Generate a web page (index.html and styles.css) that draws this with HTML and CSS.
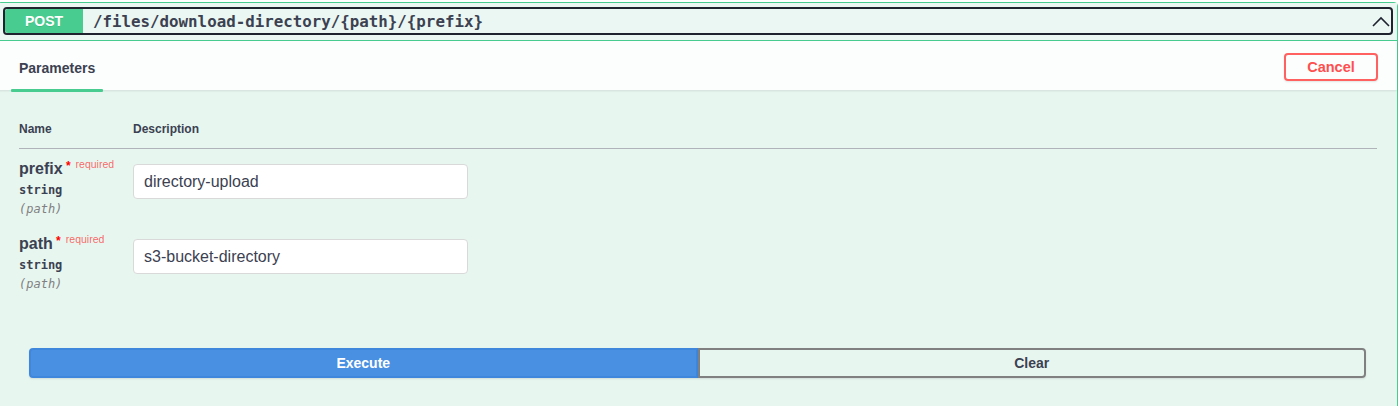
FILE: index.html
```html
<!DOCTYPE html>
<html>
<head>
<meta charset="utf-8">
<link rel="stylesheet" href="styles.css">
</head>
<body>
<div class="page">
  <div class="opblock">
    <div class="summary">
      <div class="summary-btn">
        <span class="method">POST</span>
        <span class="path">/files/download-directory/{path}/{prefix}</span>
        <svg class="chevron" width="20" height="20" viewBox="0 0 20 20"><path d="M2 14 L10 6 L18 14" fill="none" stroke="#1f2330" stroke-width="1.6"/></svg>
      </div>
    </div>
    <div class="section-header">
      <div class="tab">
        <h4 class="tab-title"><span>Parameters</span></h4>
      </div>
      <button class="btn-cancel">Cancel</button>
    </div>
    <div class="params">
      <div class="params-head">
        <div class="col-name">Name</div>
        <div class="col-desc">Description</div>
      </div>
      <div class="param-row">
        <div class="col-name">
          <div class="pname">prefix<span class="star">&nbsp;*</span><span class="req">required</span></div>
          <div class="ptype">string</div>
          <div class="pin">(path)</div>
        </div>
        <div class="col-desc">
          <div class="input">directory-upload</div>
        </div>
      </div>
      <div class="param-row">
        <div class="col-name">
          <div class="pname">path<span class="star">&nbsp;*</span><span class="req">required</span></div>
          <div class="ptype">string</div>
          <div class="pin">(path)</div>
        </div>
        <div class="col-desc">
          <div class="input">s3-bucket-directory</div>
        </div>
      </div>
    </div>
    <div class="btn-group">
      <button class="btn-exec">Execute</button>
      <button class="btn-clear">Clear</button>
    </div>
  </div>
</div>
</body>
</html>
```
FILE: styles.css
```css
html, body {
  margin: 0;
  padding: 0;
  background: #ffffff;
  overflow: hidden;
}
body {
  font-family: "Liberation Sans", Arial, sans-serif;
  color: #3b4151;
}
.page {
  padding-top: 2px;
  height: 404px;
}
.opblock {
  margin-left: -3px;
  width: 1401px;
  box-sizing: border-box;
  border: 1px solid #49cc90;
  border-radius: 4px;
  background: #e8f6f0;
  height: 420px;
}
.summary {
  background: #ebf7f2;
  padding: 4px 4px 5px 5px;
  border-bottom: 1px solid #49cc90;
}
.summary-btn {
  display: flex;
  align-items: center;
  height: 28px;
  box-sizing: border-box;
  border: 2px solid #1f2330;
  border-radius: 4px;
}
.method {
  background: #49cc90;
  color: #fff;
  font-weight: 700;
  font-size: 14px;
  width: 78px;
  height: 24px;
  line-height: 24px;
  text-align: center;
  border-radius: 3px 0 0 3px;
  text-shadow: 0 1px 0 rgba(0,0,0,.1);
}
.path {
  flex: 1;
  font-family: "DejaVu Sans Mono", monospace;
  font-weight: 700;
  font-size: 15.8px;
  padding-left: 10px;
  color: #3b4151;
}
.chevron {
  margin-top: 1px;
}
.section-header {
  display: flex;
  align-items: center;
  justify-content: space-between;
  height: 49px;
  background: #fcfefd;
  box-shadow: 0 1px 2px rgba(0,0,0,.1);
  padding: 0 19px 0 21px;
}
.tab-title {
  margin: 0;
  font-size: 14px;
  font-weight: 700;
  position: relative;
  top: 2px;
}
.tab-title span {
  position: relative;
}
.tab-title span::after {
  content: "";
  position: absolute;
  left: -8px;
  right: -8px;
  bottom: -16px;
  height: 3px;
  background: #49cc90;
  border-radius: 1px;
}
.btn-cancel {
  width: 94px;
  height: 28px;
  border: 2px solid #ff6060;
  border-radius: 4px;
  background: transparent;
  color: #ff4f4f;
  font-family: "Liberation Sans", Arial, sans-serif;
  font-weight: 700;
  font-size: 14.5px;
  box-shadow: 0 1px 2px rgba(0,0,0,.1);
  margin-top: 2px;
}
.params {
  padding: 20px 20px 0 21px;
}
.params-head {
  display: flex;
  font-size: 12px;
  font-weight: 700;
  padding: 12px 0 11px;
  border-bottom: 1px solid #b0b4ba;
  line-height: 15px;
}
.col-name {
  width: 114px;
  flex: none;
}
.col-desc {
  flex: 1;
}
.param-row {
  display: flex;
  padding: 10px 0 5px;
}
.pname {
  font-size: 16px;
  font-weight: 700;
  line-height: 18px;
  white-space: nowrap;
  padding-top: 1px;
}
.star {
  color: #f00;
  font-size: 12px;
  position: relative;
  top: -4px;
}
.req {
  color: rgba(255,0,0,.6);
  font-size: 10.5px;
  font-weight: 400;
  position: relative;
  top: -6px;
  padding-left: 5px;
}
.ptype {
  font-family: "DejaVu Sans Mono", monospace;
  font-size: 12px;
  font-weight: 700;
  line-height: 20px;
  padding-top: 1px;
}
.pin {
  font-family: "DejaVu Sans Mono", monospace;
  font-size: 12px;
  font-style: italic;
  color: #808080;
  line-height: 19px;
}
.input {
  margin-top: 5px;
  width: 335px;
  height: 35px;
  box-sizing: border-box;
  background: #fff;
  border: 1px solid #d9d9d9;
  border-radius: 4px;
  padding: 0 10px;
  font-size: 16px;
  line-height: 33px;
  color: #3b4151;
}
.btn-group {
  display: flex;
  margin: 49px 31px 0 31px;
}
.btn-group button {
  flex: 1;
  height: 30px;
  font-family: "Liberation Sans", Arial, sans-serif;
  font-size: 14px;
  font-weight: 700;
  box-shadow: 0 1px 2px rgba(0,0,0,.1);
}
.btn-exec {
  background: #4990e2;
  border: 2px solid #3f87dc;
  color: #fff;
  border-radius: 4px 0 0 4px;
}
.btn-clear {
  background: transparent;
  border: 2px solid #808080;
  color: #3b4151;
  border-radius: 0 4px 4px 0;
}
```
